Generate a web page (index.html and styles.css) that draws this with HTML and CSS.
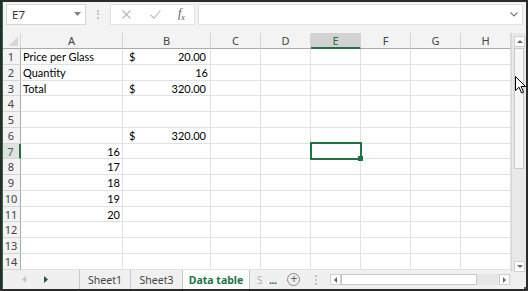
FILE: index.html
```html
<!DOCTYPE html>
<html lang="en">
<head>
    <meta charset="UTF-8">
    <title>Data table - Excel</title>
    <link rel="stylesheet" href="styles.css">
</head>
<body>
    <div class="window">
        <!-- Name box and formula bar -->
        <div class="formula-bar">
            <div class="name-box">
                <span>E7</span>
                <svg class="caret" width="7" height="4" viewBox="0 0 7 4"><path d="M0 0H7L3.5 4Z" fill="#808080"/></svg>
            </div>
            <div class="grip"></div>
            <div class="fx-buttons">
                <svg width="9" height="9" viewBox="0 0 9 9"><path d="M0.5 0.5L8.5 8.5M8.5 0.5L0.5 8.5" stroke="#b8b8b8" stroke-width="1.1"/></svg>
                <svg width="11" height="9" viewBox="0 0 11 9"><path d="M0.5 5L4 8.3L10.5 0.5" stroke="#b8b8b8" stroke-width="1.1" fill="none"/></svg>
                <span class="fx"><i>f</i><sub>x</sub></span>
            </div>
            <div class="formula-input">
                <svg width="8" height="5" viewBox="0 0 8 5"><path d="M0.5 0.5L4 4L7.5 0.5" stroke="#777" stroke-width="1.1" fill="none"/></svg>
            </div>
        </div>

        <div class="workspace">
            <div class="main">
                <!-- Grid -->
                <div class="sheet">
                    <div class="h corner"></div><div class="h">A</div><div class="h">B</div><div class="h">C</div><div class="h">D</div><div class="h sel">E</div><div class="h">F</div><div class="h">G</div><div class="h">H</div>
                    <div class="r">1</div><div>Price per Glass</div><div class="a"><span>$</span><span>20.00</span></div><div></div><div></div><div></div><div></div><div></div><div></div>
                    <div class="r">2</div><div>Quantity</div><div class="n">16</div><div></div><div></div><div></div><div></div><div></div><div></div>
                    <div class="r">3</div><div>Total</div><div class="a"><span>$</span><span>320.00</span></div><div></div><div></div><div></div><div></div><div></div><div></div>
                    <div class="r">4</div><div></div><div></div><div></div><div></div><div></div><div></div><div></div><div></div>
                    <div class="r">5</div><div></div><div></div><div></div><div></div><div></div><div></div><div></div><div></div>
                    <div class="r">6</div><div></div><div class="a"><span>$</span><span>320.00</span></div><div></div><div></div><div></div><div></div><div></div><div></div>
                    <div class="r sel">7</div><div class="n">16</div><div></div><div></div><div></div><div class="active"></div><div></div><div></div><div></div>
                    <div class="r">8</div><div class="n">17</div><div></div><div></div><div></div><div></div><div></div><div></div><div></div>
                    <div class="r">9</div><div class="n">18</div><div></div><div></div><div></div><div></div><div></div><div></div><div></div>
                    <div class="r">10</div><div class="n">19</div><div></div><div></div><div></div><div></div><div></div><div></div><div></div>
                    <div class="r">11</div><div class="n">20</div><div></div><div></div><div></div><div></div><div></div><div></div><div></div>
                    <div class="r">12</div><div></div><div></div><div></div><div></div><div></div><div></div><div></div><div></div>
                    <div class="r">13</div><div></div><div></div><div></div><div></div><div></div><div></div><div></div><div></div>
                    <div class="r">14</div><div></div><div></div><div></div><div></div><div></div><div></div><div></div><div></div>
                </div>

                <!-- Sheet tabs and horizontal scroll -->
                <div class="tab-bar">
                    <div class="tab-nav">
                        <svg width="4" height="7" viewBox="0 0 4 7"><path d="M4 0V7L0 3.5Z" fill="#c4c4c4"/></svg>
                        <svg width="4" height="7" viewBox="0 0 4 7"><path d="M0 0V7L4 3.5Z" fill="#1f5c3a"/></svg>
                    </div>
                    <div class="tab" style="width: 51px">Sheet1</div>
                    <div class="tab" style="width: 52px">Sheet3</div>
                    <div class="tab active" style="width: 68px">Data table</div>
                    <div class="tab partial"><span>S</span></div>
                    <div class="more">...</div>
                    <div class="add-sheet">+</div>
                    <div class="grip small"></div>
                    <div class="hscroll">
                        <div class="sbtn"><svg width="3" height="6" viewBox="0 0 3 6"><path d="M3 0V6L0 3Z" fill="#666"/></svg></div>
                        <div class="thumb"></div>
                        <div class="track"></div>
                        <div class="sbtn"><svg width="3" height="6" viewBox="0 0 3 6"><path d="M0 0V6L3 3Z" fill="#666"/></svg></div>
                    </div>
                </div>
            </div>

            <div class="side">
                <div class="vscroll">
                    <div class="sbtn"><svg width="6" height="3" viewBox="0 0 6 3"><path d="M0 3H6L3 0Z" fill="#666"/></svg></div>
                    <div class="thumb"></div>
                    <div class="track"></div>
                    <div class="sbtn"><svg width="6" height="3" viewBox="0 0 6 3"><path d="M0 0H6L3 3Z" fill="#666"/></svg></div>
                </div>
                <div class="side-corner"></div>
            </div>
        </div>

        <!-- Mouse pointer -->
        <svg class="cursor" width="11" height="18" viewBox="0 0 11 18"><path d="M0.5 0.5V14.5L4 11.2L6.6 17L8.6 16.1L6.1 10.5H10.5Z" fill="#fff" stroke="#000" stroke-width="1"/></svg>
    </div>
</body>
</html>
```

FILE: styles.css
```css
* {
    margin: 0;
    padding: 0;
    box-sizing: border-box;
}

body {
    width: 528px;
    height: 291px;
    overflow: hidden;
    font-family: "Noto Sans", "Open Sans", sans-serif;
    background: #fff;
}

.window {
    position: relative;
    width: 528px;
    height: 291px;
    border: 2px solid #2b2b2b;
    background: #f3f3f3;
    overflow: hidden;
}

/* Formula bar */

.formula-bar {
    display: flex;
    align-items: center;
    height: 31px;
    padding: 0 3px 7px 2px;
}

.name-box {
    display: flex;
    align-items: center;
    justify-content: space-between;
    width: 80px;
    height: 21px;
    margin-left: 2px;
    padding: 0 4px 0 5px;
    background: #fff;
    border: 1px solid #d6d6d6;
    font-size: 11.5px;
    color: #333;
}

.grip {
    width: 2px;
    height: 9px;
    margin-left: 11px;
    border-left: 2px dotted #c2c2c2;
}

.fx-buttons {
    display: flex;
    align-items: center;
    gap: 19px;
    width: 85px;
    height: 21px;
    margin-left: 11px;
    padding-left: 11px;
    background: #fff;
    border: 1px solid #e2e2e2;
}

.fx {
    font-family: "Liberation Serif", serif;
    font-size: 12px;
    color: #555;
    margin-left: -2px;
}

.fx sub {
    font-size: 8px;
    font-style: italic;
}

.formula-input {
    flex: 1;
    display: flex;
    align-items: center;
    justify-content: flex-end;
    height: 21px;
    margin-left: 3px;
    padding-right: 4px;
    background: #fff;
    border: 1px solid #e2e2e2;
}

/* Sheet grid */

.workspace {
    display: flex;
    height: 256px;
}

.main {
    width: 509px;
    display: flex;
    flex-direction: column;
}

.sheet {
    display: grid;
    grid-template-columns: 19px 102px 88px repeat(6, 50px);
    grid-template-rows: 16px repeat(14, 15.75px);
    height: 237px;
    overflow: hidden;
    background: #fff;
    font-family: Lato, "Liberation Sans", sans-serif;
    font-size: 11px;
    color: #000;
}

.sheet > div {
    border-right: 1px solid #e1e1e1;
    border-bottom: 1px solid #e1e1e1;
    padding: 0 2px;
    line-height: 16px;
    white-space: nowrap;
}

.sheet > .h {
    background: #f3f3f3;
    border-right-color: #d5d5d5;
    border-bottom-color: #ababab;
    text-align: center;
    font-family: "Noto Sans", sans-serif;
    font-size: 11px;
    line-height: 15px;
    color: #444;
}

.sheet > .h.corner {
    background: #f3f3f3 linear-gradient(to top left, #d8d8d8 50%, transparent 50%) no-repeat right 2px bottom 2px / 10px 10px;
}

.sheet > .h.sel {
    background: #d2d2d2;
    border-bottom: 2px solid #217346;
    color: #217346;
}

.sheet > .r {
    background: #f3f3f3;
    border-right-color: #ababab;
    border-bottom-color: #d5d5d5;
    padding: 0;
    text-align: center;
    font-family: "Noto Sans", sans-serif;
    font-size: 11px;
    line-height: 15px;
    color: #444;
}

.sheet > .r.sel {
    background: #e1e1e1;
    border-right: 2px solid #217346;
    color: #217346;
}

.sheet > .n {
    text-align: right;
}

.sheet > .a {
    display: flex;
    justify-content: space-between;
    padding: 0 4px 0 6px;
}

.sheet > .active {
    position: relative;
}

.active::after {
    content: "";
    position: absolute;
    left: -1px;
    top: -2px;
    right: -2px;
    bottom: -2px;
    border: 2px solid #217346;
}

.active::before {
    content: "";
    position: absolute;
    right: -3px;
    bottom: -3px;
    width: 5px;
    height: 5px;
    background: #217346;
    z-index: 1;
}

/* Tabs */

.tab-bar {
    display: flex;
    align-items: stretch;
    height: 19px;
    background: #f0f0f0;
    font-size: 10.5px;
    color: #444;
}

.tab-nav {
    display: flex;
    align-items: center;
    gap: 18px;
    width: 77px;
    padding-left: 20px;
}

.tab {
    display: flex;
    align-items: center;
    justify-content: center;
    border-left: 1px solid #c8c8c8;
}

.tab.active {
    background: #fff;
    border-right: 1px solid #c8c8c8;
    color: #217346;
    font-weight: bold;
}

.tab.partial {
    width: 12px;
    overflow: hidden;
    justify-content: flex-start;
    padding-left: 7px;
    border-left: none;
    color: #b0b0b0;
}

.more {
    display: flex;
    align-items: center;
    margin-left: 7px;
    color: #217346;
    font-weight: bold;
    letter-spacing: -0.5px;
}

.add-sheet {
    align-self: center;
    width: 13px;
    height: 13px;
    margin-left: 11px;
    border: 1px solid #8a8a8a;
    border-radius: 50%;
    font-size: 12px;
    line-height: 10px;
    text-align: center;
    color: #666;
}

.grip.small {
    align-self: center;
    margin-left: 15px;
    height: 10px;
}

.hscroll {
    display: flex;
    align-self: center;
    width: 181px;
    height: 11px;
    margin-left: auto;
    padding-right: 1px;
    background: #e6e6e6;
}

.hscroll .thumb {
    width: 136px;
    background: #fff;
    border: 1px solid #c8c8c8;
}

.hscroll .track {
    flex: 1;
}

.sbtn {
    display: flex;
    align-items: center;
    justify-content: center;
    width: 11px;
    height: 11px;
    background: #fff;
    border: 1px solid #d0d0d0;
}

/* Vertical scroll */

.side {
    width: 15px;
    display: flex;
    flex-direction: column;
}

.vscroll {
    display: flex;
    flex-direction: column;
    height: 239px;
    padding: 3px 2px 0;
    background: #e8e8e8;
    border-left: 1px solid #d8d8d8;
}

.vscroll .thumb {
    height: 121px;
    margin-top: 1px;
    background: #f7f7f7;
    border: 1px solid #c8c8c8;
}

.vscroll .track {
    flex: 1;
}

.side-corner {
    flex: 1;
    background: #f0f0f0;
}

.cursor {
    position: absolute;
    left: 513px;
    top: 74px;
}
```
